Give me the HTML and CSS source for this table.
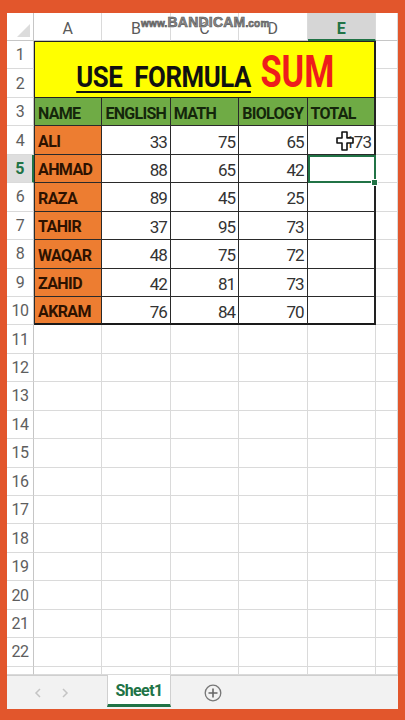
FILE: index.html
```html
<!DOCTYPE html>
<html>
<head>
<meta charset="utf-8">
<link rel="stylesheet" href="styles.css">
</head>
<body>
<div class="frame">
  <div class="app">
    <div class="sheet">
      <div class="c corner"><span class="tri"></span></div>
      <div class="c colh">A</div>
      <div class="c colh">B</div>
      <div class="c colh">C</div>
      <div class="c colh">D</div>
      <div class="c colh active">E</div>
      <div class="c colh"></div>

      <div class="c rowh">1</div>
      <div class="c title"><span class="use">USE&nbsp;&nbsp;FORMULA</span><span class="sum">SUM</span></div>
      <div class="c"></div>
      <div class="c rowh">2</div>
      <div class="c"></div>

      <div class="c rowh">3</div>
      <div class="c hd first">NAME</div>
      <div class="c hd">ENGLISH</div>
      <div class="c hd">MATH</div>
      <div class="c hd">BIOLOGY</div>
      <div class="c hd last">TOTAL</div>
      <div class="c"></div>

      <div class="c rowh">4</div>
      <div class="c nm first">ALI</div>
      <div class="c num">33</div>
      <div class="c num">75</div>
      <div class="c num">65</div>
      <div class="c num last cur">173<svg class="plus" width="18" height="20" viewBox="0 0 18 20"><path d="M6 1h5v6h6v5h-6v7H6v-7H1V7h5z" fill="#fff" stroke="#111" stroke-width="1.6" stroke-linejoin="round"/></svg></div>
      <div class="c"></div>

      <div class="c rowh active">5</div>
      <div class="c nm first">AHMAD</div>
      <div class="c num">88</div>
      <div class="c num">65</div>
      <div class="c num">42</div>
      <div class="c num last sel"></div>
      <div class="c"></div>

      <div class="c rowh">6</div>
      <div class="c nm first">RAZA</div>
      <div class="c num">89</div>
      <div class="c num">45</div>
      <div class="c num">25</div>
      <div class="c num last"></div>
      <div class="c"></div>

      <div class="c rowh">7</div>
      <div class="c nm first">TAHIR</div>
      <div class="c num">37</div>
      <div class="c num">95</div>
      <div class="c num">73</div>
      <div class="c num last"></div>
      <div class="c"></div>

      <div class="c rowh">8</div>
      <div class="c nm first">WAQAR</div>
      <div class="c num">48</div>
      <div class="c num">75</div>
      <div class="c num">72</div>
      <div class="c num last"></div>
      <div class="c"></div>

      <div class="c rowh">9</div>
      <div class="c nm first">ZAHID</div>
      <div class="c num">42</div>
      <div class="c num">81</div>
      <div class="c num">73</div>
      <div class="c num last"></div>
      <div class="c"></div>

      <div class="c rowh">10</div>
      <div class="c nm first bot">AKRAM</div>
      <div class="c num bot">76</div>
      <div class="c num bot">84</div>
      <div class="c num bot">70</div>
      <div class="c num last bot"></div>
      <div class="c"></div>

      <div class="c rowh">11</div><div class="c"></div><div class="c"></div><div class="c"></div><div class="c"></div><div class="c"></div><div class="c"></div>
      <div class="c rowh">12</div><div class="c"></div><div class="c"></div><div class="c"></div><div class="c"></div><div class="c"></div><div class="c"></div>
      <div class="c rowh">13</div><div class="c"></div><div class="c"></div><div class="c"></div><div class="c"></div><div class="c"></div><div class="c"></div>
      <div class="c rowh">14</div><div class="c"></div><div class="c"></div><div class="c"></div><div class="c"></div><div class="c"></div><div class="c"></div>
      <div class="c rowh">15</div><div class="c"></div><div class="c"></div><div class="c"></div><div class="c"></div><div class="c"></div><div class="c"></div>
      <div class="c rowh">16</div><div class="c"></div><div class="c"></div><div class="c"></div><div class="c"></div><div class="c"></div><div class="c"></div>
      <div class="c rowh">17</div><div class="c"></div><div class="c"></div><div class="c"></div><div class="c"></div><div class="c"></div><div class="c"></div>
      <div class="c rowh">18</div><div class="c"></div><div class="c"></div><div class="c"></div><div class="c"></div><div class="c"></div><div class="c"></div>
      <div class="c rowh">19</div><div class="c"></div><div class="c"></div><div class="c"></div><div class="c"></div><div class="c"></div><div class="c"></div>
      <div class="c rowh">20</div><div class="c"></div><div class="c"></div><div class="c"></div><div class="c"></div><div class="c"></div><div class="c"></div>
      <div class="c rowh">21</div><div class="c"></div><div class="c"></div><div class="c"></div><div class="c"></div><div class="c"></div><div class="c"></div>
      <div class="c rowh">22</div><div class="c"></div><div class="c"></div><div class="c"></div><div class="c"></div><div class="c"></div><div class="c"></div>
      <div class="c rowh"></div><div class="c"></div><div class="c"></div><div class="c"></div><div class="c"></div><div class="c"></div><div class="c"></div>

      <div class="watermark"><span class="wsm">www.</span>BANDICAM<span class="wsm">.com</span></div>
    </div>
    <div class="tabs">
      <div class="nav">
        <svg width="8" height="10" viewBox="0 0 8 10"><path d="M6 1L2 5l4 4" fill="none" stroke="#c4c4c4" stroke-width="1.5"/></svg>
        <svg width="8" height="10" viewBox="0 0 8 10"><path d="M2 1l4 4-4 4" fill="none" stroke="#c4c4c4" stroke-width="1.5"/></svg>
      </div>
      <div class="tab">Sheet1</div>
      <div class="add">
        <svg width="18" height="18" viewBox="0 0 18 18"><circle cx="9" cy="9" r="7.8" fill="none" stroke="#777" stroke-width="1.3"/><path d="M9 4.5v9M4.5 9h9" stroke="#666" stroke-width="1.6"/></svg>
      </div>
    </div>
  </div>
</div>
</body>
</html>
```

FILE: styles.css
```css
html, body {
  margin: 0;
  padding: 0;
  background: #e2562c;
}
.frame {
  width: 405px;
  height: 720px;
  box-sizing: border-box;
  padding: 13px 7px 11px 7px;
}
.app {
  background: #fff;
  height: 696px;
  display: flex;
  flex-direction: column;
  overflow: hidden;
}
.sheet {
  position: relative;
  display: grid;
  grid-template-columns: 27px repeat(5, 68.4px) 1fr;
  grid-template-rows: 28px repeat(22, 28.45px) 1fr;
  height: 662px;
  font-family: Roboto, "Liberation Sans", sans-serif;
}
.c {
  box-sizing: border-box;
  border-right: 1px solid #dadada;
  border-bottom: 1px solid #dadada;
  display: flex;
  align-items: center;
  min-width: 0;
  overflow: visible;
}
.corner {
  position: relative;
  border-right: 1px solid #c6c6c6;
  border-bottom: 1px solid #c6c6c6;
}
.tri {
  position: absolute;
  right: 3px;
  bottom: 3px;
  width: 0;
  height: 0;
  border-left: 13px solid transparent;
  border-bottom: 13px solid #dcdcdc;
}
.colh {
  justify-content: center;
  color: #5a5a5a;
  font-size: 16px;
  border-bottom: 1px solid #c6c6c6;
  padding-top: 4px;
}
.colh.active {
  background: #d6d6d6;
  color: #217346;
  font-weight: bold;
  border-bottom: 2px solid #217346;
}
.rowh {
  justify-content: center;
  color: #5e5e5e;
  font-size: 16px;
  border-right: 1px solid #c6c6c6;
  letter-spacing: -0.5px;
}
.rowh.active {
  background: #dedede;
  color: #217346;
  font-weight: bold;
  border-right: 2px solid #217346;
}
.title {
  grid-column: span 5;
  grid-row: span 2;
  background: #ffff00;
  border: 1px solid #222;
  border-right: 2px solid #222;
  justify-content: center;
  align-items: baseline;
  padding-top: 8px;
  gap: 8px;
  font-weight: bold;
}
.use {
  display: inline-block;
  font-size: 30px;
  line-height: 1;
  letter-spacing: -0.5px;
  color: #111;
  text-decoration: underline;
  text-decoration-thickness: 2px;
  text-underline-offset: 4px;
  transform: scaleX(0.86);
  margin: 0 -13px;
}
.sum {
  display: inline-block;
  font-size: 44px;
  line-height: 1;
  color: #ee1c1c;
  transform: scaleX(0.78);
  margin: 0 -10px;
}
.hd {
  background: #6fab45;
  color: #15260b;
  font-weight: bold;
  font-size: 16px;
  letter-spacing: -0.7px;
  padding-left: 3px;
  border-right: 1px solid #2a2a2a;
  border-bottom: 1px solid #2a2a2a;
  padding-top: 3px;
}
.first {
  border-left: 1px solid #2a2a2a;
}
.last {
  border-right: 2px solid #222 !important;
}
.nm {
  background: #ed7d31;
  color: #2d1200;
  font-weight: bold;
  font-size: 16px;
  letter-spacing: -0.6px;
  padding-left: 3px;
  border-right: 1px solid #2a2a2a;
  border-bottom: 1px solid #2a2a2a;
  padding-top: 3px;
}
.num {
  justify-content: flex-end;
  color: #333;
  font-size: 17px;
  letter-spacing: -1px;
  padding-right: 3px;
  padding-top: 3px;
  border-right: 1px solid #2a2a2a;
  border-bottom: 1px solid #2a2a2a;
}
.bot {
  border-bottom: 2px solid #1a1a1a;
}
.cur {
  position: relative;
}
.plus {
  position: absolute;
  left: 28px;
  top: 5px;
}
.sel {
  position: relative;
  outline: 2px solid #217346;
  outline-offset: -2px;
}
.sel::after {
  content: "";
  position: absolute;
  right: -4px;
  bottom: -4px;
  width: 5px;
  height: 5px;
  background: #217346;
  border: 1px solid #fff;
}
.watermark {
  position: absolute;
  left: 134px;
  top: 1px;
  font-family: "Liberation Sans", Arial, sans-serif;
  font-weight: bold;
  font-size: 14px;
  color: #8a8a8a;
  -webkit-text-stroke: 0.6px #555;
  text-shadow: 0 0 2px #fff, 0 0 2px #fff;
  letter-spacing: 0.2px;
}
.wsm {
  font-size: 10px;
}
.tabs {
  flex: 1;
  background: #f2f2f2;
  border-top: 1px solid #cfcfcf;
  display: flex;
  align-items: stretch;
}
.nav {
  width: 100px;
  display: flex;
  align-items: center;
  gap: 19px;
  padding-left: 27px;
  box-sizing: border-box;
}
.tab {
  width: 64px;
  margin-top: -1px;
  background: #fff;
  border-left: 1px solid #d0d0d0;
  border-right: 1px solid #d0d0d0;
  border-bottom: 3px solid #217346;
  display: flex;
  align-items: center;
  justify-content: center;
  font-family: Roboto, "Liberation Sans", sans-serif;
  font-weight: bold;
  font-size: 16px;
  letter-spacing: -0.6px;
  color: #217346;
  box-sizing: border-box;
  margin-bottom: 2px;
  padding-top: 2px;
}
.add {
  display: flex;
  align-items: center;
  padding-left: 33px;
}
```
